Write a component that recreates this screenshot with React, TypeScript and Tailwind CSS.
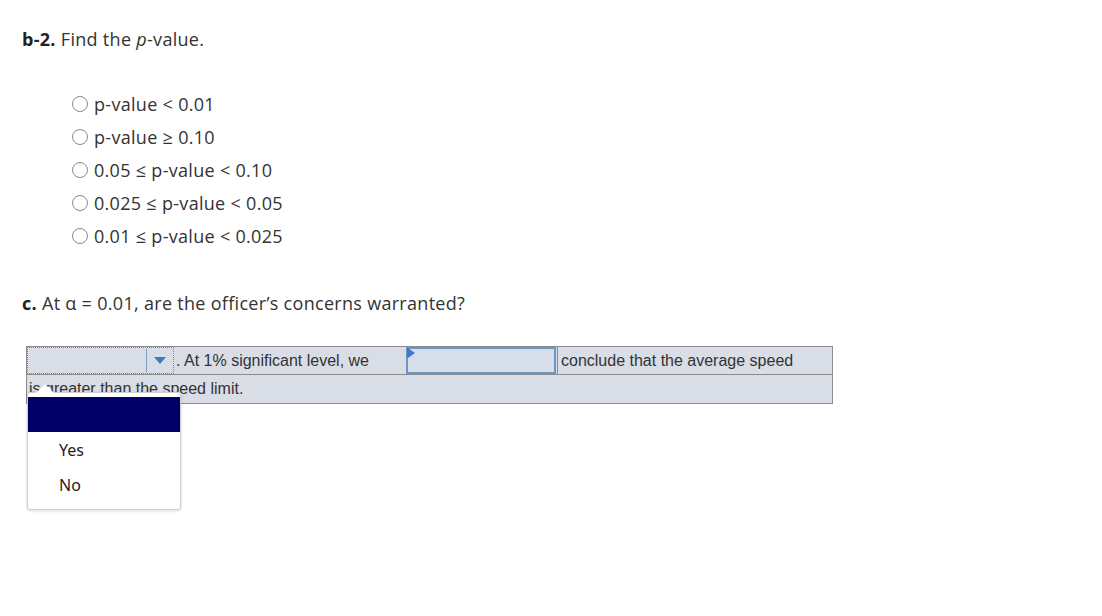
import React from "react";

const options = [
  "p-value < 0.01",
  "p-value \u2265 0.10",
  "0.05 \u2264 p-value < 0.10",
  "0.025 \u2264 p-value < 0.05",
  "0.01 \u2264 p-value < 0.025",
];

export default function App() {
  return (
    <div className="w-[1102px] h-[616px] bg-white text-[#333333] font-['Open_Sans',sans-serif] tracking-[0.3px] relative overflow-hidden">
      <div className="pl-[22px] pt-[27px]">
        <div className="text-[18px] leading-[24px]">
          <span className="font-bold text-[#222]">b-2.</span> Find the <i>p</i>-value.
        </div>
        <div className="pl-[50px] pt-[36px] flex flex-col">
          {options.map((o) => (
            <div key={o} className="flex items-center h-[33px]">
              <span className="w-[16px] h-[16px] rounded-full border border-[#8a8a8a] bg-white mr-[6px]" />
              <span className="text-[18px] leading-[24px]">{o}</span>
            </div>
          ))}
        </div>
        <div className="pt-[39px] text-[18px] leading-[24px]">
          <span className="font-bold text-[#222]">c.</span> At α = 0.01, are the officer’s concerns warranted?
        </div>
        <div className="pt-[31px] pl-[4px] tracking-normal">
          <div className="relative w-[807px] border border-[#8c8c8c] bg-[#d9dde6] font-['Liberation_Sans',Arial,sans-serif] text-[16px] text-[#333]">
            <div className="flex h-[28px] items-stretch border-b border-[#8c8c8c]">
              <div className="w-[147px] border border-dotted border-[#5a8ac6] flex justify-end">
                <div className="w-[27px] flex items-center justify-center border-l border-[#7a9cc8] my-[1px]">
                  <svg width="12" height="7" viewBox="0 0 12 7"><path d="M0 0h12L6 7z" fill="#3d7cc4" /></svg>
                </div>
              </div>
              <div className="w-[232px] pl-[2px] flex items-center">. At 1% significant level, we</div>
              <div className="relative w-[150px] border-2 border-[#6f95c5] bg-[#d6deea] mt-0">
                <svg className="absolute left-[-1px] top-[-1px]" width="8" height="10" viewBox="0 0 8 10"><path d="M0 0h1l7 5-7 5H0z" fill="#3d7cc4" /></svg>
              </div>
              <div className="ml-[1px] border-l border-[#8c8c8c] pl-[3px] flex items-center">conclude that the average speed</div>
            </div>
            <div className="h-[28px] pl-[2px] flex items-center">is greater than the speed limit.</div>

            <div className="absolute left-[0px] top-[45px] w-[154px] h-[118px] bg-white border border-[#cfcfcf] rounded-[3px] shadow-[0_1px_3px_rgba(0,0,0,0.15)] pt-[4px] font-['Noto_Sans',sans-serif] text-[16px] text-[#222]">
              <div className="absolute left-[8px] top-[-9px] w-0 h-0 border-l-[9px] border-r-[9px] border-b-[9px] border-l-transparent border-r-transparent border-b-white" />
              <div className="h-[35px] bg-[#000066]" />
              <div className="h-[35px] pl-[31px] flex items-center">Yes</div>
              <div className="h-[35px] pl-[31px] flex items-center">No</div>
            </div>
          </div>
        </div>
      </div>
    </div>
  );
}
